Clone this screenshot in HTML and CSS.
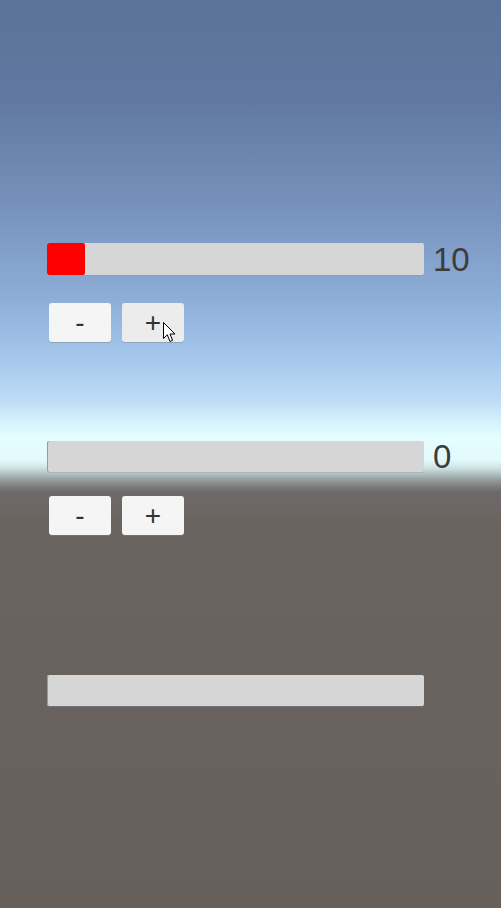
FILE: index.html
```html
<!DOCTYPE html>
<html>
<head>
<meta charset="utf-8">
<link rel="stylesheet" href="styles.css">
</head>
<body>
<div class="scene">
  <section class="group first">
    <div class="row">
      <div class="bar"><div class="fill" style="width:10%"></div></div>
      <span class="value">10</span>
    </div>
    <div class="buttons">
      <button class="btn">-</button>
      <button class="btn hover">+
        <svg class="cursor" width="13" height="21" viewBox="0 0 13 21"><path d="M0.5,0.5 L0.5,16.5 L4.3,12.8 L7,19.5 L9.6,18.4 L7,12 L12,12 Z" fill="#fff" stroke="#000" stroke-width="1" stroke-linejoin="miter"/></svg>
      </button>
    </div>
  </section>
  <section class="group second">
    <div class="row">
      <div class="bar"><div class="fill" style="width:0%"></div></div>
      <span class="value">0</span>
    </div>
    <div class="buttons">
      <button class="btn">-</button>
      <button class="btn">+</button>
    </div>
  </section>
  <section class="group third">
    <div class="row">
      <div class="bar"></div>
    </div>
  </section>
</div>
</body>
</html>
```
FILE: styles.css
```css
html, body {
  margin: 0;
  padding: 0;
}
body {
  width: 501px;
  height: 908px;
  overflow: hidden;
  font-family: "Liberation Sans", Arial, sans-serif;
  background: linear-gradient(to bottom,
    #5b7299 0px,
    #6179a0 100px,
    #7590ba 200px,
    #8daed8 300px,
    #a6c8ec 360px,
    #bcdcf5 400px,
    #d6f2fc 422px,
    #e4fdff 438px,
    #e2fafc 460px,
    #cfe3e4 468px,
    #b0c0c0 474px,
    #959c9c 480px,
    #7f7f7f 486px,
    #6e6a69 492px,
    #6a6461 520px,
    #675f59 908px);
}
.scene {
  display: flex;
  flex-direction: column;
  padding: 243px 0 0 47px;
}
.group {
  display: flex;
  flex-direction: column;
}
.second { margin-top: 99px; }
.third { margin-top: 140px; }
.row {
  display: flex;
  align-items: center;
  height: 32px;
}
.second .row, .third .row { height: 31px; }
.bar {
  width: 377px;
  height: 100%;
  background: #d6d6d6;
  border-radius: 2px;
  box-shadow: inset 1px 0 0 #8d9cb2, 0 1px 0 rgba(140,150,160,0.35);
  overflow: hidden;
  display: flex;
}
.fill {
  height: 100%;
  background: #ff0000;
  border-radius: 2px;
}
.value {
  margin-left: 9px;
  font-size: 33px;
  color: #3c3c3c;
  line-height: 1;
}
.buttons {
  display: flex;
  gap: 11px;
  margin: 28px 0 0 2px;
}
.second .buttons { margin-top: 24px; }
.btn {
  position: relative;
  width: 62px;
  height: 39px;
  padding: 0;
  border: none;
  border-radius: 3px;
  background: #f5f5f5;
  box-shadow: 0 1px 0 rgba(120,130,140,0.45);
  font-family: "Liberation Sans", Arial, sans-serif;
  font-size: 28px;
  color: #333333;
  line-height: 39px;
}
.btn.hover { background: #ececec; }
.cursor {
  position: absolute;
  left: 41px;
  top: 19px;
}
```
